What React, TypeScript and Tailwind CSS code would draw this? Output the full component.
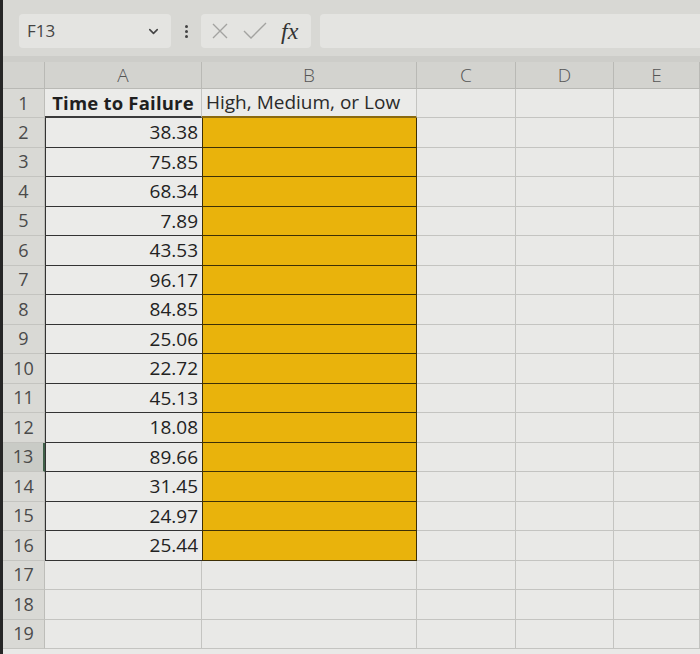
import { ChevronDown } from 'lucide-react'

const values = ['38.38', '75.85', '68.34', '7.89', '43.53', '96.17', '84.85', '25.06', '22.72', '45.13', '18.08', '89.66', '31.45', '24.97', '25.44']

const font = { fontFamily: '"Open Sans", "Liberation Sans", sans-serif' }

function RowHead({ n, selected }: { n: number; selected?: boolean }) {
  return (
    <div
      className={
        'flex items-center justify-center border-b border-[#c4c4c0] text-[18px] text-[#4a4a4a] ' +
        (selected ? 'bg-[#c9cbc6] border-r-2 border-r-[#3f5f48]' : 'bg-[#d9d9d5] border-r border-r-[#bdbdb9]')
      }
    >
      {n}
    </div>
  )
}

function Empty() {
  return <div className="border-b border-r border-[#c4c4c1] bg-[#e9e9e7]" />
}

export default function App() {
  return (
    <div className="w-[700px] h-[654px] overflow-hidden bg-[#e9e9e7] border-l-[3px] border-[#262626]" style={font}>
      {/* formula bar */}
      <div className="h-[62px] bg-[#d8d8d4] flex items-start pt-[14px] pl-[16px] gap-[9px] border-b-[6px] border-[#cdcdc9]">
        <div className="w-[152px] h-[34px] bg-[#e4e4e1] rounded-[4px] flex items-center justify-between pl-[8px] pr-[10px]">
          <span className="text-[17px] text-[#444]">F13</span>
          <ChevronDown className="w-[15px] h-[15px] text-[#444]" strokeWidth={2.5} />
        </div>
        <div className="w-[12px] h-[34px] flex flex-col items-center justify-center gap-[2px]">
          <span className="w-[3px] h-[3px] rounded-full bg-[#444]" />
          <span className="w-[3px] h-[3px] rounded-full bg-[#444]" />
          <span className="w-[3px] h-[3px] rounded-full bg-[#444]" />
        </div>
        <div className="w-[110px] h-[34px] bg-[#e4e4e1] rounded-[4px] flex items-center pl-[10px] gap-[14px]">
          <svg width="18" height="18" viewBox="0 0 18 18" className="text-[#a3a3a0]">
            <path d="M2 2 L16 16 M16 2 L2 16" stroke="currentColor" strokeWidth="1.4" fill="none" />
          </svg>
          <svg width="24" height="18" viewBox="0 0 24 18" className="text-[#a3a3a0]">
            <path d="M1 9 L8 16 L23 1" stroke="currentColor" strokeWidth="1.4" fill="none" />
          </svg>
          <span className="text-[24px] italic text-[#333] leading-none" style={{ fontFamily: '"Liberation Serif", serif' }}>
            fx
          </span>
        </div>
        <div className="flex-1 h-[34px] bg-[#e4e4e1] rounded-l-[4px]" />
      </div>

      {/* sheet */}
      <div className="grid grid-cols-[42px_157px_215px_99px_98px_1fr] grid-rows-[27px_29px_repeat(18,29.5px)]">
        <div className="bg-[#d3d3cf] border-b border-r border-[#b9b9b5]" />
        {['A', 'B', 'C', 'D', 'E'].map((c) => (
          <div key={c} className="bg-[#d3d3cf] border-b border-r border-[#b9b9b5] flex items-center justify-center text-[19px] text-[#555] font-light">
            {c}
          </div>
        ))}

        <RowHead n={1} />
        <div className="bg-[#ebebe9] border-b-2 border-b-[#3a3a3a] border-r border-r-[#c4c4c1] flex items-center justify-center text-[18.5px] font-bold text-[#1f1f1f] whitespace-nowrap tracking-[0.2px]">
          Time to Failure
        </div>
        <div className="bg-[#ebebe9] border-b-2 border-b-[#8a6a10] border-r border-r-[#c4c4c1] flex items-center pl-[4px] text-[19px] text-[#2a2a2a] whitespace-nowrap">
          High, Medium, or Low
        </div>
        <Empty />
        <Empty />
        <Empty />

        {values.map((v, i) => (
          <div key={v + i} className="contents">
            <RowHead n={i + 2} selected={i + 2 === 13} />
            <div className="bg-[#ebebe9] border-b border-b-[#333] border-l border-l-[#333] flex items-center justify-end pr-[4px] text-[19px] text-[#222]">
              {v}
            </div>
            <div className="bg-[#e9b30c] border-b border-b-[#3d2f05] border-l border-l-[#3d2f05] border-r border-r-[#3d2f05]" />
            <Empty />
            <Empty />
            <Empty />
          </div>
        ))}

        {[17, 18, 19].map((n) => (
          <div key={n} className="contents">
            <RowHead n={n} />
            <Empty />
            <Empty />
            <Empty />
            <Empty />
            <Empty />
          </div>
        ))}
      </div>
    </div>
  )
}
